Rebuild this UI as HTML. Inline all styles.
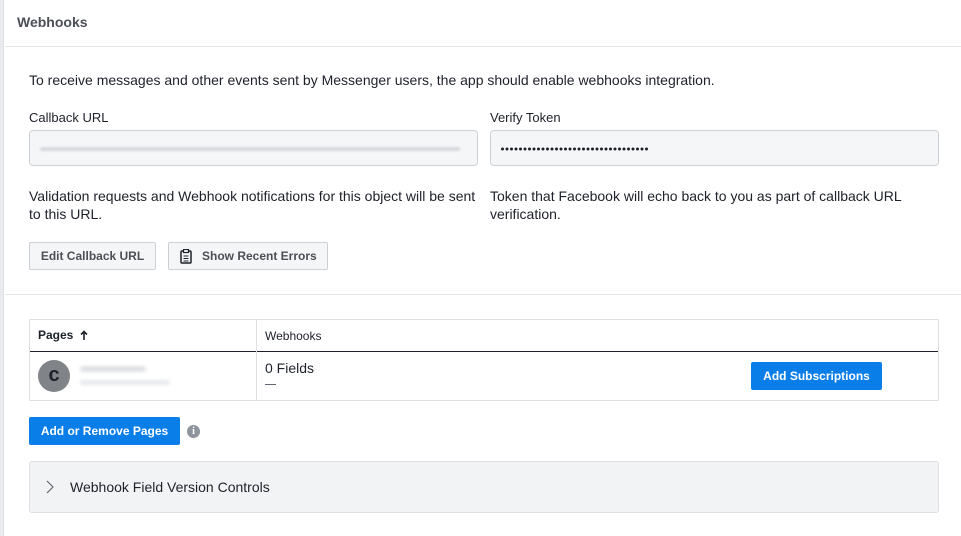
<!DOCTYPE html>
<html><head><meta charset="utf-8"><style>
*{box-sizing:border-box;margin:0;padding:0}
body{width:961px;height:536px;background:#fff;font-family:"Liberation Sans",Arial,sans-serif;color:#1d2129;position:relative;overflow:hidden}
.a{position:absolute}
.strip{left:0;top:0;width:4px;height:536px;background:#e9ebee;border-right:1px solid #dddfe2}
.t{font-size:14px;white-space:nowrap}
.inp{height:36px;border:1px solid #ccd0d5;border-radius:4px;background:#f5f6f7}
.btn{height:28px;border:1px solid #ccd0d5;border-radius:2px;background:#f5f6f7;font-size:12px;font-weight:bold;color:#4b4f56;line-height:26px}
.blue{background:#0a7ee8;color:#fff;border-radius:2px;font-size:12px;font-weight:bold;text-align:center;line-height:28px;height:28px}
</style></head><body>
<div class="a strip"></div>
<div class="a t" style="left:17px;top:14px;font-weight:bold;color:#4b4f56">Webhooks</div>
<div class="a" style="left:5px;top:46px;width:956px;height:1px;background:#e5e5e5"></div>
<div class="a t" style="left:29px;top:72px">To receive messages and other events sent by Messenger users, the app should enable webhooks integration.</div>
<div class="a" style="left:29px;top:110px;font-size:13px;color:#1d2129">Callback URL</div>
<div class="a" style="left:490px;top:110px;font-size:13px;color:#1d2129">Verify Token</div>
<div class="a inp" style="left:29px;top:130px;width:449px"><div style="margin:16px 10px 0;height:4px;width:420px;background:#d5d8dd;border-radius:2px;filter:blur(1px)"></div></div>
<div class="a inp" style="left:490px;top:130px;width:449px"><svg style="position:absolute;left:10px;top:16px" width="150" height="4"><line x1="1.5" y1="2" x2="146" y2="2" stroke="#1d2129" stroke-width="3" stroke-dasharray="0 4.5" stroke-linecap="round"/></svg></div>
<div class="a t" style="left:29px;top:187px;line-height:18px;width:455px;white-space:normal">Validation requests and Webhook notifications for this object will be sent to this URL.</div>
<div class="a t" style="left:490px;top:187px;line-height:18px;width:440px;white-space:normal">Token that Facebook will echo back to you as part of callback URL verification.</div>
<div class="a btn" style="left:29px;top:242px;width:127px;text-align:center">Edit Callback URL</div>
<div class="a btn" style="left:168px;top:242px;width:160px"><svg style="position:absolute;left:11px;top:6px" width="12" height="15" viewBox="0 0 12 15"><rect x="1" y="2" width="10" height="12" rx="1" fill="none" stroke="#1d2129" stroke-width="1.5"/><rect x="3.5" y="0.5" width="5" height="3" fill="#fff" stroke="#1d2129" stroke-width="1.2"/><path d="M3.5 7h5M3.5 9.5h5M3.5 12h5" stroke="#1d2129" stroke-width="1"/></svg><span style="position:absolute;left:33px">Show Recent Errors</span></div>
<div class="a" style="left:5px;top:294px;width:956px;height:1px;background:#e5e5e5"></div>
<div class="a" style="left:29px;top:319px;width:910px;height:82px;border:1px solid #dddfe2"></div>
<div class="a" style="left:30px;top:351px;width:908px;height:1px;background:#1d2129"></div>
<div class="a" style="left:256px;top:320px;width:1px;height:80px;background:#dddfe2"></div>
<div class="a" style="left:38px;top:328px;font-size:12px;font-weight:bold">Pages</div>
<svg class="a" style="left:80px;top:330px" width="8" height="11" viewBox="0 0 8 11"><path d="M4 10V1.5M1 4.5L4 1.5 7 4.5" fill="none" stroke="#1d2129" stroke-width="1.6"/></svg>
<div class="a" style="left:38px;top:360px;width:32px;height:32px;border-radius:50%;background:#808489;color:#1d2129;font-weight:bold;font-size:20px;text-align:center;line-height:30px">c</div>
<div class="a" style="left:80px;top:366px;width:66px;height:6px;background:#dfe1e4;border-radius:3px;filter:blur(1.5px)"></div>
<div class="a" style="left:80px;top:380px;width:90px;height:5px;background:#e7e9ec;border-radius:3px;filter:blur(1.5px)"></div>
<div class="a" style="left:265px;top:329px;font-size:12px">Webhooks</div>
<div class="a" style="left:265px;top:360px;font-size:14px">0 Fields</div>
<div class="a" style="left:265px;top:384px;width:11px;height:1px;background:#606770"></div>
<div class="a blue" style="left:751px;top:362px;width:131px">Add Subscriptions</div>
<div class="a blue" style="left:29px;top:417px;width:151px">Add or Remove Pages</div>
<div class="a" style="left:187px;top:425px;width:13px;height:13px;border-radius:50%;background:#8d949e;color:#fff;font-size:10px;font-weight:bold;text-align:center;line-height:13px;font-family:'Liberation Serif',serif">i</div>
<div class="a" style="left:29px;top:461px;width:910px;height:52px;background:#f2f3f5;border:1px solid #dddfe2;border-radius:3px"></div>
<svg class="a" style="left:46px;top:480px" width="8" height="14" viewBox="0 0 8 14"><path d="M1 1l6 6-6 6" fill="none" stroke="#606770" stroke-width="1.2"/></svg>
<div class="a" style="left:70px;top:479px;font-size:14px;color:#1d2129">Webhook Field Version Controls</div>
</body></html>
